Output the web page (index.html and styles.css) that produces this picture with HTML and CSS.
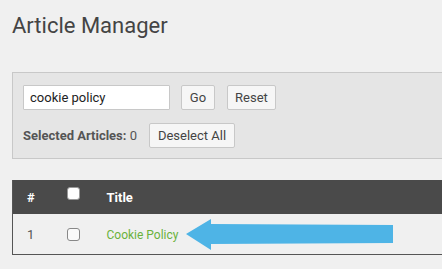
FILE: index.html
```html
<!DOCTYPE html>
<html>
<head>
<meta charset="utf-8">
<link rel="stylesheet" href="styles.css">
</head>
<body>
<div class="page">
  <h1 class="title">Article Manager</h1>
  <div class="filter">
    <div class="row">
      <input class="search" type="text" value="cookie policy">
      <button class="btn btn-go">Go</button>
      <button class="btn btn-reset">Reset</button>
    </div>
    <div class="row row-sel">
      <span class="sel-label">Selected Articles: <span class="sel-count">0</span></span>
      <button class="btn btn-desel">Deselect All</button>
    </div>
  </div>
  <div class="table-wrap">
    <table class="grid">
      <thead>
        <tr>
          <th class="c-num">#</th>
          <th class="c-chk"><span class="chk chk-head"></span></th>
          <th class="c-title">Title</th>
        </tr>
      </thead>
      <tbody>
        <tr>
          <td class="c-num">1</td>
          <td class="c-chk"><span class="chk"></span></td>
          <td class="c-title"><a class="link" href="#">Cookie Policy</a></td>
        </tr>
      </tbody>
    </table>
    <svg class="arrow" width="210" height="32" viewBox="0 0 210 32">
      <polygon points="0,15 25,0 25,5 207,6 207,24 25,25 25,31" fill="#4eb4e6"/>
    </svg>
  </div>
</div>
</body>
</html>
```

FILE: styles.css
```css
html, body {
  margin: 0;
  padding: 0;
  background: #f0f0f0;
  overflow: hidden;
}
.page {
  width: 442px;
  height: 269px;
  padding-left: 12px;
  box-sizing: border-box;
  overflow: hidden;
  font-family: Roboto, "Liberation Sans", sans-serif;
}
.title {
  margin: 13px 0 33px;
  font-size: 22px;
  line-height: 26px;
  font-weight: 400;
  color: #444;
}
.filter {
  width: 460px;
  height: 87px;
  box-sizing: border-box;
  background: #e5e5e5;
  border: 1px solid #c8c8c8;
  padding: 12px 10px 0;
}
.row {
  display: flex;
  align-items: center;
  height: 25px;
}
.row-sel {
  margin-top: 13px;
}
.search {
  width: 147px;
  height: 25px;
  box-sizing: border-box;
  border: 1px solid #c8c8c8;
  border-radius: 1px;
  background: #fff;
  padding: 0 6px;
  font-family: Roboto, "Liberation Sans", sans-serif;
  font-size: 13px;
  color: #222;
  outline: none;
}
.btn {
  height: 25px;
  box-sizing: border-box;
  border: 1px solid #c8c8c8;
  border-radius: 2px;
  background: #f6f6f6;
  font-family: Roboto, "Liberation Sans", sans-serif;
  font-size: 13px;
  color: #444;
  padding: 0;
  white-space: nowrap;
  text-align: center;
}
.btn-go {
  margin-left: 11px;
  width: 34px;
}
.btn-reset {
  margin-left: 12px;
  width: 49px;
}
.btn-desel {
  margin-left: 12px;
  width: 86px;
}
.sel-label {
  font-size: 13px;
  font-weight: 700;
  color: #555;
}
.sel-count {
  font-weight: 400;
}
.table-wrap {
  position: relative;
  margin-top: 21px;
  width: 440px;
}
.grid {
  width: 440px;
  border-collapse: collapse;
  border-left: 1px solid #555;
  border-bottom: 1px solid #555;
}
.grid th {
  background: #4a4a4a;
  color: #fff;
  font-size: 13px;
  font-weight: 700;
  height: 34px;
  padding: 0;
  text-align: left;
  vertical-align: middle;
}
.grid td {
  height: 40px;
  padding: 0;
  font-size: 13px;
  color: #555;
  vertical-align: middle;
}
.c-num {
  width: 40px;
  padding-left: 14px !important;
  box-sizing: border-box;
}
.c-chk {
  width: 40px;
  padding-left: 14px !important;
}
.chk {
  display: block;
  width: 13px;
  height: 13px;
  box-sizing: border-box;
  border: 1px solid #999;
  border-radius: 3px;
  background: #fff;
}
.chk-head {
  transform: translateY(-4px);
}
.grid td .chk {
  border-color: #888;
  background: #fafafa;
}
.link {
  color: #6ab23c;
  text-decoration: none;
  font-size: 12px;
}
.arrow {
  position: absolute;
  left: 174px;
  top: 39px;
}
```
